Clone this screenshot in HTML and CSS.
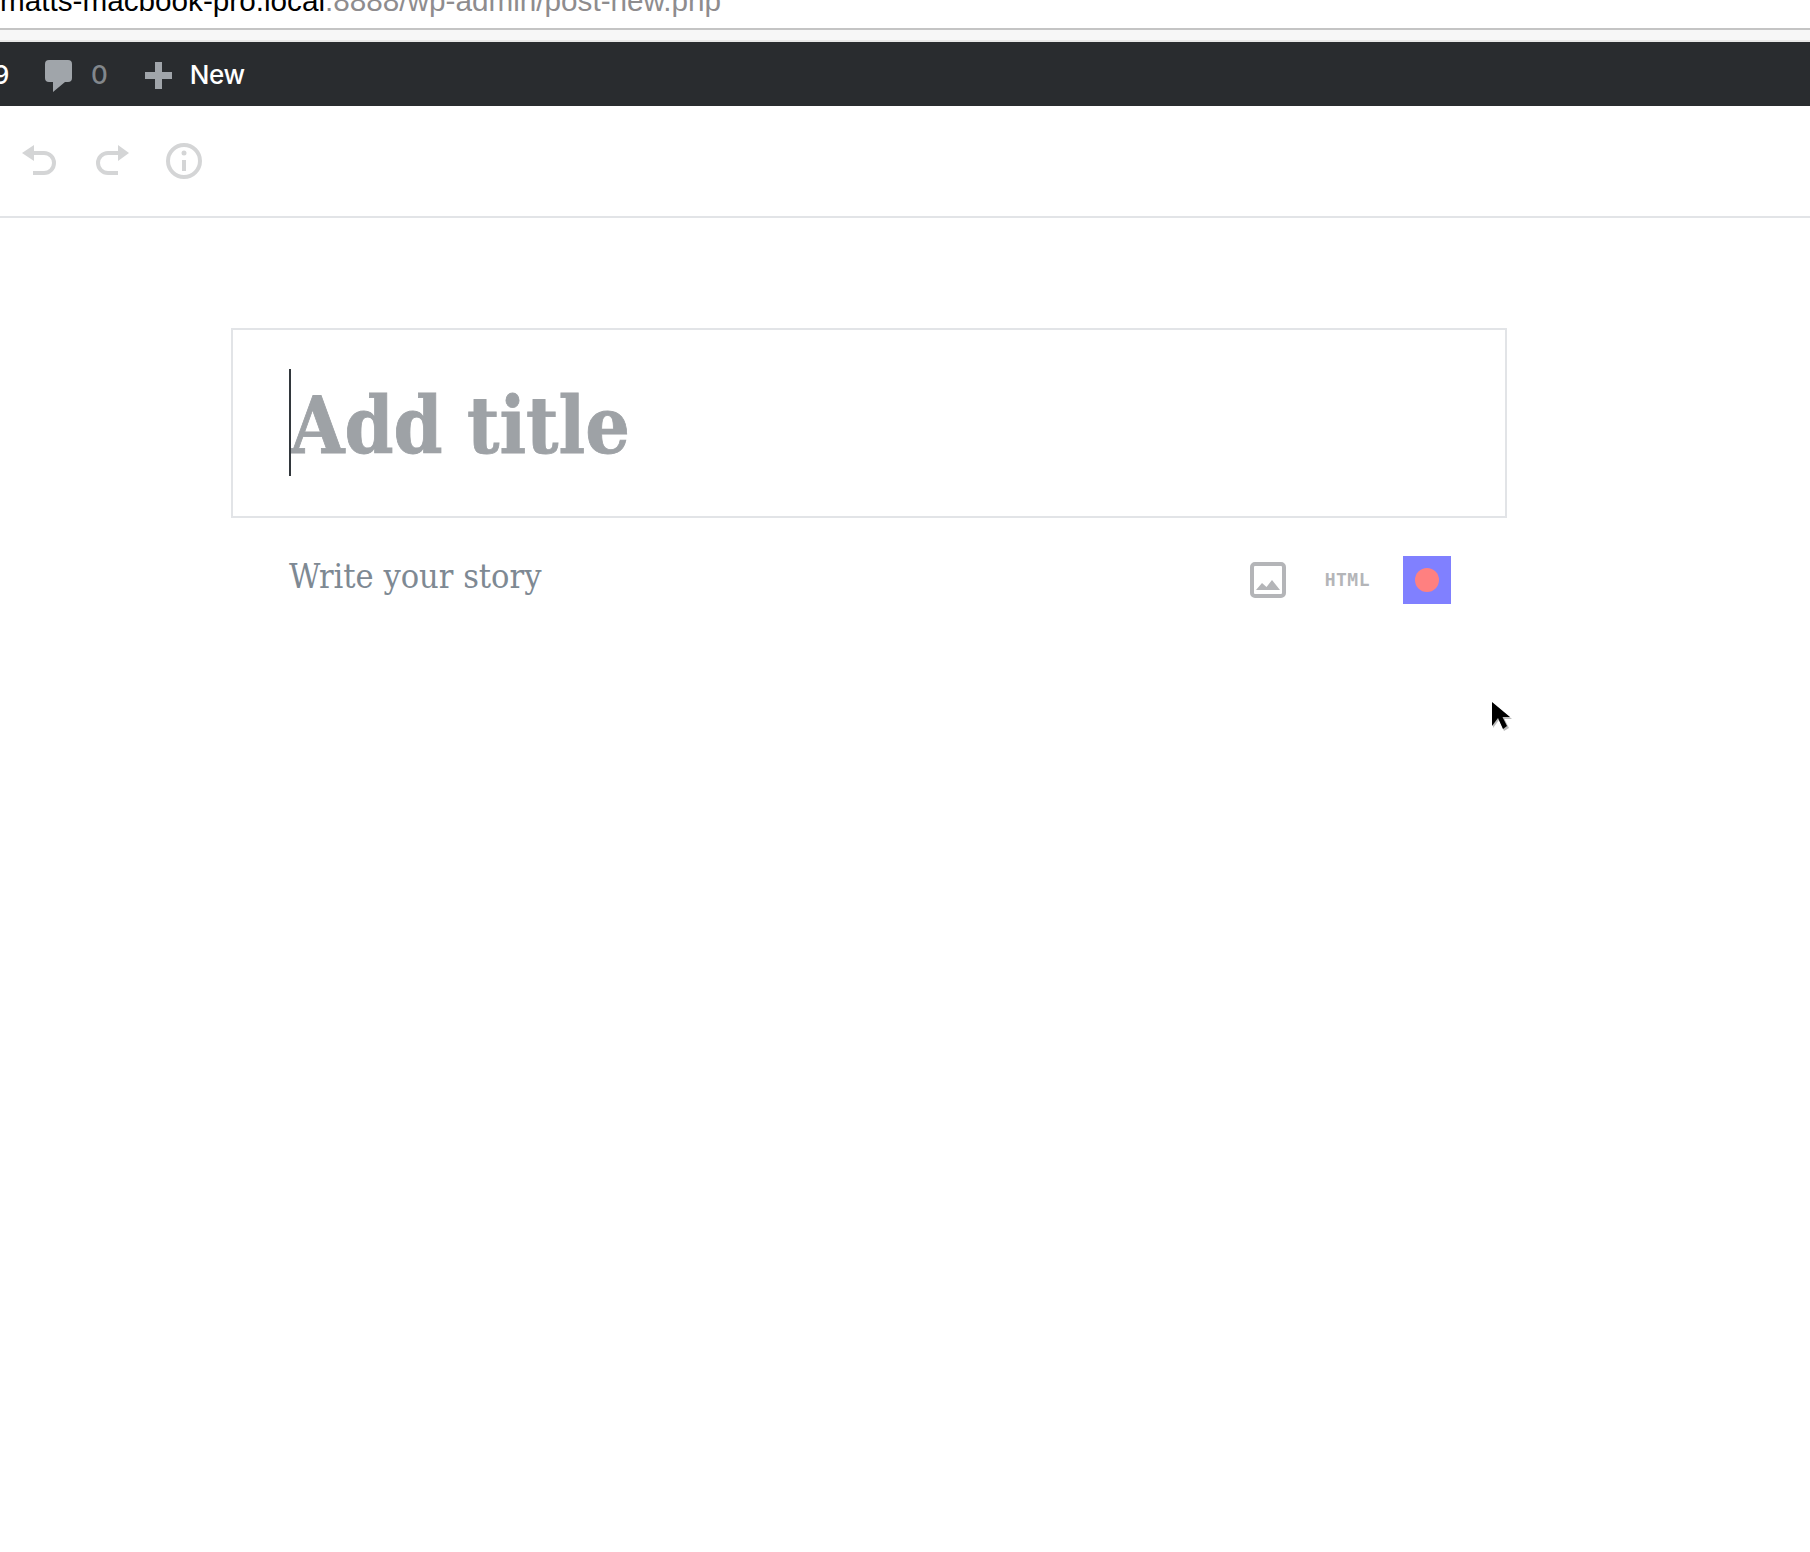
FILE: index.html
```html
<!DOCTYPE html>
<html lang="en">
<head>
<meta charset="utf-8">
<title>Add New Post</title>
<link rel="stylesheet" href="styles.css">
</head>
<body>
<div class="page">
  <header class="browser">
    <div class="url"><span class="host">matts-macbook-pro.local</span><span class="path">:8888/wp-admin/post-new.php</span></div>
  </header>
  <div class="strip"></div>
  <nav class="adminbar">
    <span class="count-cut">9</span>
    <svg class="ic-comment" width="27" height="32" viewBox="0 0 27 32"><path class="fill-bar" d="M4 0h19a4 4 0 0 1 4 4v14a4 4 0 0 1-4 4H20L8 32V22H4a4 4 0 0 1-4-4V4a4 4 0 0 1 4-4z"/></svg>
    <span class="comment-count">0</span>
    <svg class="ic-plus" width="27" height="27" viewBox="0 0 27 27"><path class="fill-bar" d="M10 0h7v10h10v7H17v10h-7V17H0v-7h10z"/></svg>
    <span class="new">New</span>
  </nav>
  <div class="toolbar">
    <svg class="tool" width="36" height="36" viewBox="0 0 36 36"><path class="tool-stroke" d="M12 10h10a10 10 0 0 1 0 20H11"/><path class="tool-fill" d="M0 10 12 2v16z"/></svg>
    <svg class="tool" width="36" height="36" viewBox="0 0 36 36"><path class="tool-stroke" d="M24 10H14a10 10 0 0 0 0 20h10"/><path class="tool-fill" d="M35 10 24 2v16z"/></svg>
    <svg class="tool" width="36" height="36" viewBox="0 0 36 36"><circle class="tool-stroke" cx="18" cy="18" r="16"/><circle class="tool-fill" cx="18" cy="10" r="2.500"/><path class="tool-fill" d="M16 17h4v11h-4z"/></svg>
  </div>
  <main class="editor">
    <div class="title-box">
      <span class="caret"></span>
      <h1 class="title">Add title</h1>
    </div>
    <div class="story-row">
      <p class="story">Write your story</p>
      <div class="inserters">
        <svg class="ins-image" width="36" height="36" viewBox="0 0 36 36"><rect class="img-frame" x="2" y="2" width="32" height="32" rx="3"/><path class="img-fill" d="M6 28l6-7 4.500 4 5.500-7 8 10z"/></svg>
        <span class="ins-html">HTML</span>
        <span class="ins-square"><span class="ins-dot"></span></span>
      </div>
    </div>
  </main>
  <svg class="pointer" width="26" height="34" viewBox="0 0 26 34"><path class="pointer-shadow" d="M3 3v25l6-8 5 11 5-3-4.500-9h7.500z"/><path d="M2 2v24l6-8 5 11 4-3-4.500-9h7.500z"/></svg>
</div>
</body>
</html>
```
FILE: styles.css
```css
* { box-sizing: border-box; }
html, body { margin: 0; padding: 0; background: #fff; }
.page {
  position: relative;
  width: 1810px;
  height: 1552px;
  overflow: hidden;
  display: flex;
  flex-direction: column;
}
.browser {
  height: 30px;
  border-bottom: 2px solid #c4c4c4;
  overflow: hidden;
  flex: none;
}
.url {
  margin-top: -15px;
  font: 29.700px/32px "Liberation Sans", Arial, sans-serif;
  white-space: nowrap;
}
.host { color: #000; }
.path { color: #8e8c8e; }
.strip {
  height: 12px;
  flex: none;
  background: #f7f7f7;
  border-bottom: 2px solid #e8e8e8;
}
.adminbar {
  height: 64px;
  flex: none;
  background: #292c2f;
  display: flex;
  align-items: center;
  font: 500 26px/32px Inter, "Liberation Sans", sans-serif;
  color: #fff;
  overflow: hidden;
}
.count-cut { margin-left: -7px; width: 16px; margin-top: 2px; }
.ic-comment { margin-left: 36px; margin-top: 4px; }
.fill-bar { fill: #a0a5aa; }
.comment-count { margin-left: 19px; color: #82878c; margin-top: 2px; }
.ic-plus { margin-left: 37px; margin-top: 2px; }
.new { margin-left: 18px; margin-top: 2px; letter-spacing: -.4px; }
.toolbar {
  height: 112px;
  flex: none;
  border-bottom: 2px solid #e2e4e7;
  display: flex;
  align-items: center;
  gap: 36px;
  padding: 0 0 0 22px;
}
.tool { fill: none; }
.tool-stroke { fill: none; stroke: #d4d5d6; stroke-width: 4; }
.tool-fill { fill: #d4d5d6; }
.editor {
  padding: 110px 0 0 231px;
  width: 1507px;
}
.title-box {
  position: relative;
  height: 190px;
  border: 2px solid #e2e4e7;
  padding: 56px 0 0 57px;
}
.caret {
  position: absolute;
  left: 56px;
  top: 39px;
  width: 2px;
  height: 107px;
  background: #32373c;
}
.title {
  margin: 0;
  font: 700 78px/80px "DejaVu Serif Condensed", "DejaVu Serif", serif;
  -webkit-text-stroke: .8px #9ea2a6;
  color: #9ea2a6;
}
.story-row {
  display: flex;
  justify-content: space-between;
  align-items: flex-start;
  padding: 38px 56px 0 58px;
}
.story {
  margin: 0;
  font: 34px/40px "DejaVu Serif Condensed", "DejaVu Serif", serif;
  color: #7e8993;
}
.inserters {
  display: flex;
  align-items: center;
  height: 48px;
}
.img-frame { fill: none; stroke: #b4b5b8; stroke-width: 4; }
.img-fill { fill: #b4b5b8; }
.ins-html {
  margin-left: 39px;
  font: 700 18px/20px "DejaVu Sans Mono", monospace;
  letter-spacing: .5px;
  color: #b4b5b8;
}
.ins-square {
  margin-left: 33px;
  width: 48px;
  height: 48px;
  background: #8080ff;
  display: flex;
  align-items: center;
  justify-content: center;
}
.ins-dot {
  width: 24px;
  height: 24px;
  border-radius: 50%;
  background: #ff8080;
}
.pointer {
  position: absolute;
  left: 1490px;
  top: 700px;
}
.pointer-shadow { fill: #bbb; }
```
